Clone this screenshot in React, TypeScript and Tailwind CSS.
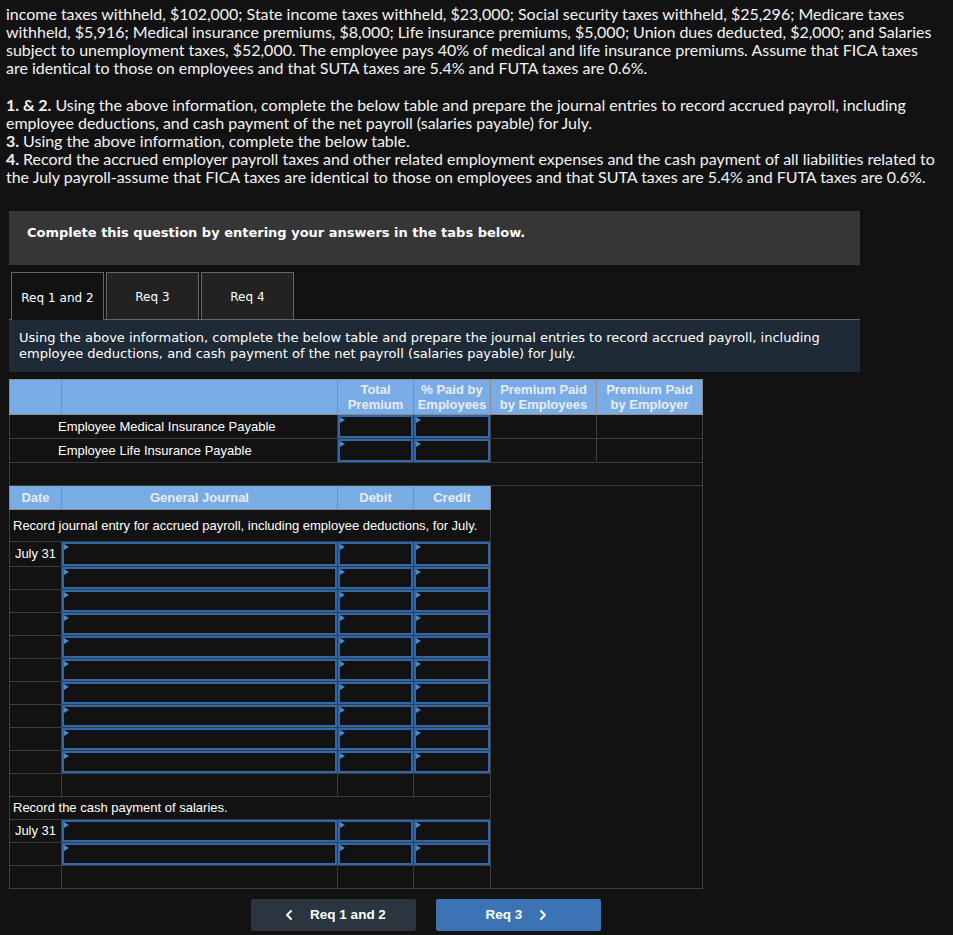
import { ChevronLeft, ChevronRight } from 'lucide-react';

const HeadCell = ({ children, className = '' }: { children?: React.ReactNode; className?: string }) => (
  <th className={`border border-[#8c8c8c] bg-[#79ace5] p-0 text-center align-middle text-[13px] leading-[15px] font-bold text-[#e8eef6] ${className}`}>
    {children}
  </th>
);

const Cell = ({ children, className = '', colSpan }: { children?: React.ReactNode; className?: string; colSpan?: number }) => (
  <td colSpan={colSpan} className={`border border-[#3c3c3c] p-0 text-[13px] text-white ${className}`}>
    {children}
  </td>
);

// answer box with the little blue flag in its corner
const InputCell = () => (
  <td className="border border-[#3c3c3c] p-0">
    <div className="relative h-full border-2 border-[#2f68ab]">
      <span className="absolute top-0 left-0 h-0 w-0 border-y-[3px] border-l-[5px] border-y-transparent border-l-[#4f86c9]" />
    </div>
  </td>
);

const JournalRow = ({ date, tall }: { date?: string; tall?: boolean }) => (
  <tr className={tall ? 'h-[25px]' : 'h-[23px]'}>
    <Cell className="text-center">{date}</Cell>
    <InputCell />
    <InputCell />
    <InputCell />
    <td colSpan={2} className="border-0 p-0" />
  </tr>
);

const EmptyRow = () => (
  <tr className="h-[23px]">
    <Cell />
    <Cell />
    <Cell />
    <Cell />
    <td colSpan={2} className="border-0 p-0" />
  </tr>
);

const Tab = ({ label, active }: { label: string; active?: boolean }) => (
  <div
    className={`flex h-[47px] w-[93px] items-center justify-center border border-b-0 border-[#666666] pt-[2px] text-[12px] tracking-[0.05px] ${
      active ? 'relative z-10 -mb-px h-[48px] bg-[#121212]' : 'bg-[#222222]'
    }`}
  >
    {label}
  </div>
);

const App = () => {
  const journalRows = ['', '', '', '', '', '', '', '', ''];

  return (
    <div className="h-[935px] overflow-hidden bg-[#121212] font-['Liberation_Sans',sans-serif] text-white">
      <div className="px-[6px] pt-[5px] font-['Lato',sans-serif] text-[16px] leading-[18px] tracking-[-0.02px] whitespace-nowrap text-[#f2f2f2]">
        <p>income taxes withheld, $102,000; State income taxes withheld, $23,000; Social security taxes withheld, $25,296; Medicare taxes</p>
        <p>withheld, $5,916; Medical insurance premiums, $8,000; Life insurance premiums, $5,000; Union dues deducted, $2,000; and Salaries</p>
        <p>subject to unemployment taxes, $52,000. The employee pays 40% of medical and life insurance premiums. Assume that FICA taxes</p>
        <p>are identical to those on employees and that SUTA taxes are 5.4% and FUTA taxes are 0.6%.</p>
        <p className="mt-[19px]"><b>1. &amp; 2.</b> Using the above information, complete the below table and prepare the journal entries to record accrued payroll, including</p>
        <p>employee deductions, and cash payment of the net payroll (salaries payable) for July.</p>
        <p><b>3.</b> Using the above information, complete the below table.</p>
        <p><b>4.</b> Record the accrued employer payroll taxes and other related employment expenses and the cash payment of all liabilities related to</p>
        <p>the July payroll-assume that FICA taxes are identical to those on employees and that SUTA taxes are 5.4% and FUTA taxes are 0.6%.</p>
      </div>

      <div className="mt-[25px] ml-[9px] w-[851px] font-['DejaVu_Sans',sans-serif]">
        <div className="flex h-[54px] items-start bg-[#363636] px-[18px] pt-[14px] text-[13px] leading-[16px] font-bold">
          Complete this question by entering your answers in the tabs below.
        </div>

        <div className="mt-[7px] flex items-start gap-[2px] border-b border-[#666666] pl-[2px]">
          <Tab label="Req 1 and 2" active />
          <Tab label="Req 3" />
          <Tab label="Req 4" />
        </div>

        <div className="h-[52px] bg-[#1e2b36] px-[10px] pt-[10px] text-[13px] leading-[16px] whitespace-nowrap">
          <p>Using the above information, complete the below table and prepare the journal entries to record accrued payroll, including</p>
          <p>employee deductions, and cash payment of the net payroll (salaries payable) for July.</p>
        </div>
      </div>

      <table className="mt-[7px] ml-[9px] h-[510px] w-[693px] table-fixed border-collapse border border-[#3c3c3c]">
        <colgroup>
          <col className="w-[52px]" />
          <col className="w-[276px]" />
          <col className="w-[76px]" />
          <col className="w-[77px]" />
          <col className="w-[106px]" />
          <col className="w-[106px]" />
        </colgroup>
        <tbody>
          <tr className="h-[35px]">
            <HeadCell />
            <HeadCell />
            <HeadCell>Total<br />Premium</HeadCell>
            <HeadCell>% Paid by<br />Employees</HeadCell>
            <HeadCell>Premium Paid<br />by Employees</HeadCell>
            <HeadCell>Premium Paid<br />by Employer</HeadCell>
          </tr>
          {['Employee Medical Insurance Payable', 'Employee Life Insurance Payable'].map((name) => (
            <tr key={name} className="h-[24px]">
              <Cell colSpan={2} className="pl-[48px] whitespace-nowrap">{name}</Cell>
              <InputCell />
              <InputCell />
              <Cell />
              <Cell />
            </tr>
          ))}
          <tr className="h-[23px]">
            <Cell colSpan={6} />
          </tr>
          <tr className="h-[24px]">
            <HeadCell>Date</HeadCell>
            <HeadCell>General Journal</HeadCell>
            <HeadCell>Debit</HeadCell>
            <HeadCell>Credit</HeadCell>
            <td colSpan={2} className="border-0 border-t border-t-[#3c3c3c] p-0" />
          </tr>
          <tr className="h-[32px]">
            <Cell colSpan={4} className="pl-[3px] whitespace-nowrap">
              Record journal entry for accrued payroll, including employee deductions, for July.
            </Cell>
            <td colSpan={2} className="border-0 p-0" />
          </tr>
          <JournalRow date="July 31" tall />
          {journalRows.map((date, i) => (
            <JournalRow key={i} date={date} />
          ))}
          <EmptyRow />
          <tr className="h-[23px]">
            <Cell colSpan={4} className="pl-[3px]">Record the cash payment of salaries.</Cell>
            <td colSpan={2} className="border-0 p-0" />
          </tr>
          <JournalRow date="July 31" />
          <JournalRow />
          <EmptyRow />
        </tbody>
      </table>

      <div className="mt-[10px] ml-[251px] flex gap-[20px] text-[13.5px] font-bold">
        <div className="flex h-[32px] w-[165px] items-center justify-center gap-[13px] rounded-[2px] bg-[#2a3540]">
          <ChevronLeft className="h-[16px] w-[16px]" strokeWidth={3} />
          Req 1 and 2
        </div>
        <div className="flex h-[32px] w-[165px] items-center justify-center gap-[13px] rounded-[2px] bg-[#3b73b5]">
          Req 3
          <ChevronRight className="h-[16px] w-[16px]" strokeWidth={3} />
        </div>
      </div>
    </div>
  );
};

export default App;
